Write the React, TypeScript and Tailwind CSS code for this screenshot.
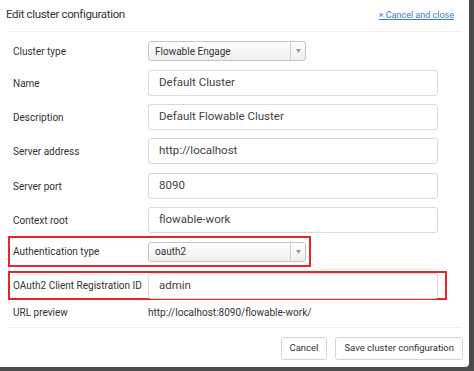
import React from "react";

const font = { fontFamily: "Roboto, 'Liberation Sans', sans-serif" };

function TextInput({ value, className = "" }: { value: string; className?: string }) {
  return (
    <div
      className={`w-[290px] h-[26px] border border-[#d9d9d9] rounded-[3px] bg-white flex items-center px-[10px] text-[11.5px] text-[#444] ${className}`}
    >
      {value}
    </div>
  );
}

function SelectBox({ value }: { value: string }) {
  return (
    <div className="w-[158px] h-[20px] border border-[#c4c4c4] rounded-[3px] bg-gradient-to-b from-white to-[#eeeeee] flex items-stretch text-[10px] text-[#333]">
      <div className="flex-1 flex items-center pl-[6px]">{value}</div>
      <div className="w-[15px] border-l border-[#d0d0d0] flex items-center justify-center">
        <svg width="5" height="4" viewBox="0 0 5 4">
          <path d="M0 0 L5 0 L2.5 4 Z" fill="#999" />
        </svg>
      </div>
    </div>
  );
}

function Label({ children }: { children: React.ReactNode }) {
  return <div className="w-[135px] shrink-0 text-[10px] text-[#333]">{children}</div>;
}

export default function App() {
  return (
    <div className="w-[474px] h-[371px] bg-[#4b4b4b] overflow-hidden" style={font}>
      <div className="w-[469px] h-[367px] bg-white rounded-br-[4px] flex flex-col">
        {/* Header */}
        <div className="h-[31px] flex items-center justify-between pl-[6px] pr-[15px]">
          <div className="text-[11.5px] tracking-[-0.35px] text-[#333] -mt-[2px]">Edit cluster configuration</div>
          <a className="text-[9px] text-[#3b7cc4] underline mt-[1px]">× Cancel and close</a>
        </div>
        <div className="mx-[8px] h-px bg-[#eeeeee]" />

        {/* Form */}
        <div className="flex flex-col">
          <div className="flex items-center pl-[13px] mt-[9px]">
            <Label>Cluster type</Label>
            <SelectBox value="Flowable Engage" />
          </div>
          <div className="flex items-center pl-[13px] mt-[9px]">
            <Label>Name</Label>
            <TextInput value="Default Cluster" />
          </div>
          <div className="flex items-center pl-[13px] mt-[8px]">
            <Label>Description</Label>
            <TextInput value="Default Flowable Cluster" />
          </div>
          <div className="flex items-center pl-[13px] mt-[8px]">
            <Label>Server address</Label>
            <TextInput value="http://localhost" />
          </div>
          <div className="flex items-center pl-[13px] mt-[9px]">
            <Label>Server port</Label>
            <TextInput value="8090" />
          </div>
          <div className="flex items-center pl-[13px] mt-[8px]">
            <Label>Context root</Label>
            <TextInput value="flowable-work" />
          </div>

          {/* Highlighted rows */}
          <div className="ml-[8px] mt-[3px] w-[303px] h-[31px] border-2 border-[#e8262a] flex items-center pl-[3px]">
            <Label>Authentication type</Label>
            <SelectBox value="oauth2" />
          </div>
          <div className="ml-[8px] mt-[4px] w-[439px] h-[29px] border-2 border-[#e8262a] flex items-center pl-[3px]">
            <Label>OAuth2 Client Registration ID</Label>
            <TextInput value="admin" className="h-[23px] w-[290px]" />
          </div>

          <div className="flex items-center pl-[13px] mt-[6px] h-[12px]">
            <Label>URL preview</Label>
            <div className="text-[10px] text-[#333]">http://localhost:8090/flowable-work/</div>
          </div>
        </div>

        <div className="mx-[8px] mt-[9px] h-px bg-[#eeeeee]" />

        {/* Footer */}
        <div className="flex justify-end gap-[8px] pr-[6px] mt-[9px]">
          <button className="h-[23px] px-[8px] border border-[#d4d4d4] rounded-[3px] bg-white text-[9.5px] text-[#333]">
            Cancel
          </button>
          <button className="h-[23px] px-[8px] border border-[#d4d4d4] rounded-[3px] bg-white text-[9.5px] text-[#333]">
            Save cluster configuration
          </button>
        </div>
      </div>
    </div>
  );
}
